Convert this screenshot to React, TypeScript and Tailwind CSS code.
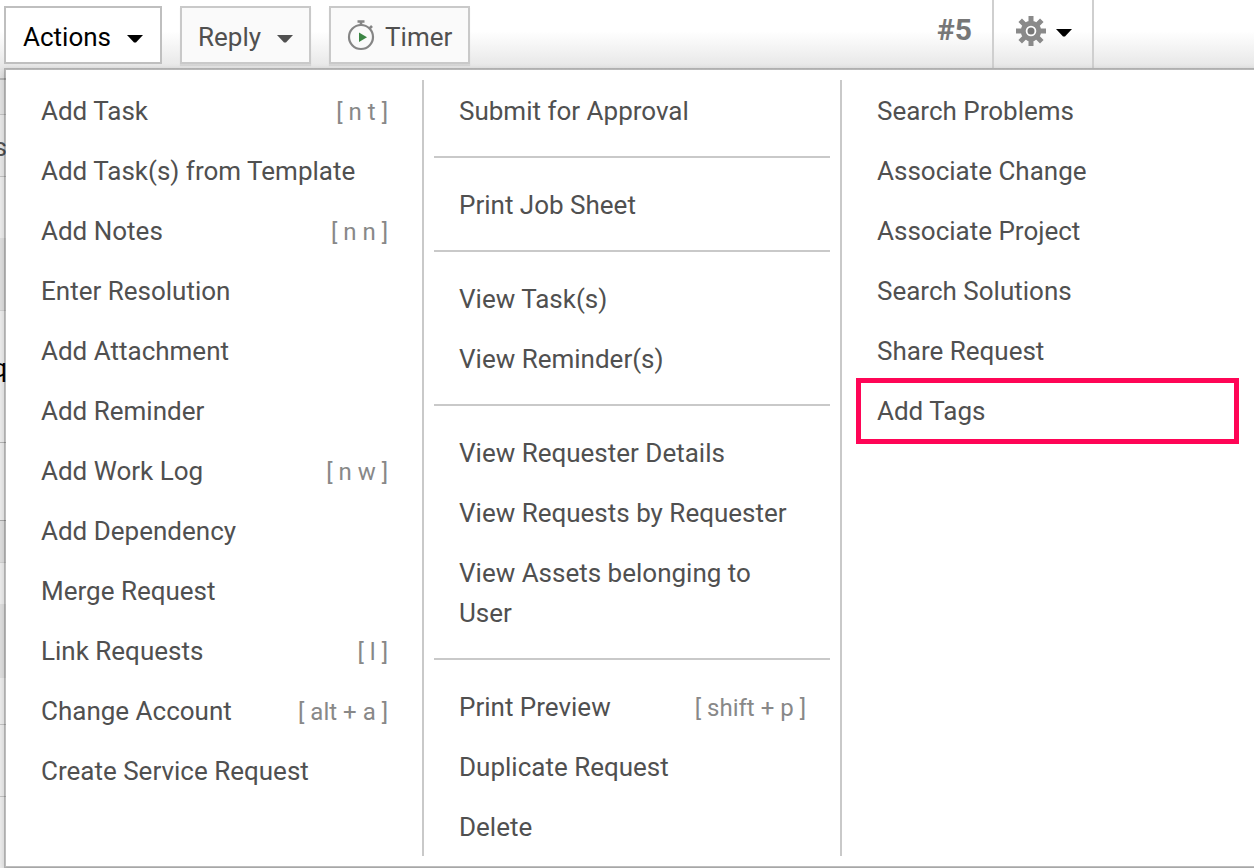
import type { ReactNode } from "react";

type Item = { label: string; keys?: string; marked?: boolean };

const taskItems: Item[] = [
  { label: "Add Task", keys: "[ n t ]" },
  { label: "Add Task(s) from Template" },
  { label: "Add Notes", keys: "[ n n ]" },
  { label: "Enter Resolution" },
  { label: "Add Attachment" },
  { label: "Add Reminder" },
  { label: "Add Work Log", keys: "[ n w ]" },
  { label: "Add Dependency" },
  { label: "Merge Request" },
  { label: "Link Requests", keys: "[ l ]" },
  { label: "Change Account", keys: "[ alt + a ]" },
  { label: "Create Service Request" },
];

const viewGroups: Item[][] = [
  [{ label: "Submit for Approval" }],
  [{ label: "Print Job Sheet" }],
  [{ label: "View Task(s)" }, { label: "View Reminder(s)" }],
  [
    { label: "View Requester Details" },
    { label: "View Requests by Requester" },
    { label: "View Assets belonging to User" },
  ],
  [
    { label: "Print Preview", keys: "[ shift + p ]" },
    { label: "Duplicate Request" },
    { label: "Delete" },
  ],
];

const relatedItems: Item[] = [
  { label: "Search Problems" },
  { label: "Associate Change" },
  { label: "Associate Project" },
  { label: "Search Solutions" },
  { label: "Share Request" },
  { label: "Add Tags", marked: true },
];

function Caret() {
  return (
    <svg className="mt-1" width="16" height="8" viewBox="0 0 16 8" fill="currentColor" aria-hidden="true">
      <path d="M0 0h16L9 7.500H7z" />
    </svg>
  );
}

function StopwatchIcon() {
  return (
    <svg className="mb-1" width="28" height="32" viewBox="0 0 28 32" fill="none" aria-hidden="true">
      <circle cx="14" cy="18" r="12" stroke="#858585" strokeWidth="2.200" />
      <path d="M10.500 2.500h7M14 2.500V6M22.500 9.500l2.500-2.500" stroke="#858585" strokeWidth="2.600" />
      <path d="M12 13.500v9.500l8-4.750z" fill="#3c8544" />
    </svg>
  );
}

function GearIcon() {
  return (
    <svg width="30" height="30" viewBox="0 0 30 30" fill="none" aria-hidden="true">
      <g stroke="#8a8a8a" strokeWidth="5">
        <path d="M15 0v7M15 23v7M0 15h7M23 15h7" />
        <path d="M4.200 4.200l5 5M20.800 20.800l5 5M25.800 4.200l-5 5M9.200 20.800l-5 5" />
      </g>
      <circle cx="15" cy="15" r="7.800" stroke="#8a8a8a" strokeWidth="5" />
      <circle cx="15" cy="15" r="3.500" fill="#777" />
    </svg>
  );
}

function MenuItem({ label, keys, marked }: Item) {
  return (
    <li className="relative">
      <button
        type="button"
        role="menuitem"
        className="flex w-full items-baseline justify-between gap-4 pt-[11px] pr-[34px] pb-[9px] pl-[35px] text-left text-[26px] leading-10 text-[#505050]"
      >
        <span>{label}</span>
        {keys && <span className="shrink-0 text-2xl leading-9 text-[#888]">{keys}</span>}
      </button>
      {marked && (
        <span className="pointer-events-none absolute -top-[2px] right-[19px] -bottom-1 left-[14px] border-[5px] border-[#ff0556]" />
      )}
    </li>
  );
}

function MenuColumn({ children }: { children: ReactNode }) {
  return <div className="border-r-2 border-[#c9c9c9] last:border-transparent">{children}</div>;
}

function ToolbarButton({ children, active }: { children: ReactNode; active?: boolean }) {
  return (
    <button
      type="button"
      className={
        active
          ? "flex h-[58px] items-center gap-4 border-2 border-[#bfbfbf] bg-white px-[17px] pt-1 text-[26px] text-black"
          : "flex h-[58px] items-center gap-4 border-2 border-[#c9c9c9] bg-[#fafafa] px-4 pt-1 text-[26px] text-[#505050] shadow-[0_2px_1px_rgba(0,0,0,0.08)]"
      }
    >
      {children}
    </button>
  );
}

// Request form that stays behind the open menu
function RequestForm() {
  return (
    <div className="text-[26px] text-[#555]">
      <div className="h-[35px] border-b border-[#c4c4c4] bg-[#e3e3e3]" />
      <div className="flex h-[62px] w-[7px] items-center justify-end overflow-hidden border-b border-[#c4c4c4] bg-[#e9e9e9] pt-1">
        s
      </div>
      <div className="h-[61px] bg-[#ededed]" />
      <div className="h-[73px] border-b border-[#d2d2d2] bg-[#dfdfdf]" />
      <div className="flex h-[132px] w-[7px] items-center justify-end overflow-hidden border-b border-[#b5b5b5] bg-[#ededed] pb-4 text-black">
        q
      </div>
      <div className="h-[78px] border-b border-[#aaa] bg-[#ededed]" />
      <div className="h-[42px] border-b border-[#d2d2d2] bg-[#dfdfdf]" />
      <div className="h-[41px] bg-[#ededed]" />
      <div className="h-[74px] bg-[#dfdfdf]" />
      <div className="h-[47px] border-b border-[#c4c4c4] bg-[#ededed]" />
      <div className="h-[72px] border-b border-[#c4c4c4] bg-[#ededed]" />
      <div className="h-[71px] bg-[#ededed]" />
    </div>
  );
}

export default function App() {
  return (
    <div className="relative min-h-screen overflow-hidden bg-[#ededed] font-['Roboto',sans-serif]">
      <header className="flex h-20 items-start border-b-2 border-[#b5b5b5] bg-linear-to-b from-white from-40% to-[#e0e0e0]">
        <div className="flex gap-[18px] pt-[6px] pl-1">
          <ToolbarButton active>
            Actions
            <Caret />
          </ToolbarButton>
          <ToolbarButton>
            Reply
            <Caret />
          </ToolbarButton>
          <ToolbarButton>
            <span className="flex items-center gap-[10px]">
              <StopwatchIcon />
              Timer
            </span>
          </ToolbarButton>
        </div>
        <h1 className="ml-auto pt-[10px] pr-5 text-[30px] leading-10 font-bold text-[#777]">#5</h1>
        <button
          type="button"
          aria-label="Settings"
          className="mr-40 flex h-[68px] w-[102px] items-center gap-[10px] border-x-2 border-[#cfcfcf] pb-[6px] pl-[22px] text-black"
        >
          <GearIcon />
          <Caret />
        </button>
      </header>

      <RequestForm />

      <div
        role="menu"
        className="absolute top-[68px] -right-2 left-1 grid grid-cols-3 border-2 border-black/20 bg-white bg-clip-padding py-[10px] shadow-[0_2px_6px_rgba(0,0,0,0.15)]"
      >
        <MenuColumn>
          <ul>
            {taskItems.map((item) => (
              <MenuItem key={item.label} {...item} />
            ))}
          </ul>
        </MenuColumn>
        <MenuColumn>
          {viewGroups.map((group, i) => (
            <div key={i}>
              {i > 0 && <hr className="mx-[10px] my-4 border-t-2 border-[#c9c9c9]" />}
              <ul>
                {group.map((item) => (
                  <MenuItem key={item.label} {...item} />
                ))}
              </ul>
            </div>
          ))}
        </MenuColumn>
        <MenuColumn>
          <ul>
            {relatedItems.map((item) => (
              <MenuItem key={item.label} {...item} />
            ))}
          </ul>
        </MenuColumn>
      </div>
    </div>
  );
}
